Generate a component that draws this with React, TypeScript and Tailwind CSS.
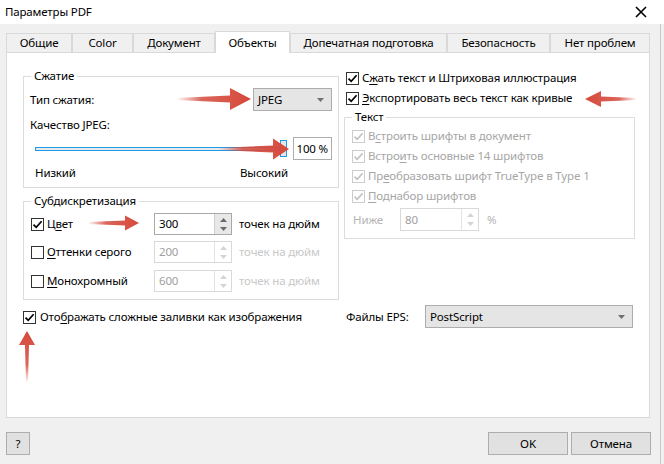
import React from "react";

const U = ({ children }: { children: React.ReactNode }) => (
  <span className="underline underline-offset-[2px] decoration-1">{children}</span>
);

function Check({ checked, disabled }: { checked?: boolean; disabled?: boolean }) {
  return (
    <span
      className={
        disabled
          ? "w-[13px] h-[13px] border border-[#cccccc] bg-white flex items-center justify-center shrink-0"
          : "w-[13px] h-[13px] border border-[#333333] bg-white flex items-center justify-center shrink-0"
      }
    >
      {checked && (
        <svg width="11" height="11" viewBox="0 0 11 11">
          <path
            d="M1.5 5.6 L4.2 8.3 L9.6 2.2"
            fill="none"
            stroke={disabled ? "#c2c2c2" : "#000000"}
            strokeWidth="1.7"
          />
        </svg>
      )}
    </span>
  );
}

function Tri({ up, color }: { up?: boolean; color: string }) {
  return (
    <svg width="7" height="4" viewBox="0 0 7 4">
      <path d={up ? "M0 4 L3.5 0 L7 4 Z" : "M0 0 L7 0 L3.5 4 Z"} fill={color} />
    </svg>
  );
}

function Spin({ value, disabled, w }: { value: string; disabled?: boolean; w: string }) {
  return (
    <div
      className={
        (disabled
          ? "border-[#d9d9d9] text-[#a0a0a0] "
          : "border-[#a9a9a9] text-black ") +
        w +
        " h-full flex border bg-white"
      }
    >
      <div className="flex-1 flex items-center pl-[4px]">{value}</div>
      <div
        className={
          disabled
            ? "w-[17px] border-l border-[#e3e3e3] bg-white flex flex-col items-center justify-center gap-[5px]"
            : "w-[17px] border-l border-[#cfcfcf] bg-[#e8e8e8] flex flex-col items-center justify-center gap-[5px]"
        }
      >
        <Tri up color={disabled ? "#d4d4d4" : "#6b6b6b"} />
        <Tri color={disabled ? "#d4d4d4" : "#6b6b6b"} />
      </div>
    </div>
  );
}

function Drop({ value, w }: { value: string; w: string }) {
  return (
    <div className={w + " h-[23px] border border-[#adadad] bg-[#e5e5e5] flex items-center pl-[4px] pr-[7px]"}>
      <span className="flex-1">{value}</span>
      <Tri color="#707070" />
    </div>
  );
}

function Group({
  title,
  className,
  children,
}: {
  title: string;
  className: string;
  children: React.ReactNode;
}) {
  return (
    <div className={"relative border border-[#dcdcdc] " + className}>
      <span className="absolute left-[7px] -top-[9px] px-[3px] bg-white leading-[16px]">{title}</span>
      {children}
    </div>
  );
}

function Arrows() {
  const red = "#d5493b";
  const right = (x0: number, x1: number, y: number, xb: number, hw: number, sw: number, id: string) => (
    <g>
      <defs>
        <linearGradient id={id} x1={x0} x2={x1} y1={y} y2={y} gradientUnits="userSpaceOnUse">
          <stop offset="0" stopColor={red} stopOpacity="0" />
          <stop offset="0.35" stopColor={red} stopOpacity="0.85" />
          <stop offset="1" stopColor={red} stopOpacity="1" />
        </linearGradient>
      </defs>
      <polygon
        points={`${x0},${y - 1} ${xb},${y - sw} ${xb},${y - hw} ${x1},${y} ${xb},${y + hw} ${xb},${y + sw} ${x0},${y + 1}`}
        fill={`url(#${id})`}
      />
    </g>
  );
  return (
    <svg className="absolute inset-0 pointer-events-none" width="664" height="464" viewBox="0 0 664 464">
      {right(176, 251, 99, 230, 11, 3.5, "a1")}
      {right(218, 289, 149, 273, 10.5, 3.5, "a2")}
      {right(88, 139, 223, 125, 7.5, 2.5, "a3")}
      {right(637, 585, 99, 601, 8, 2.5, "a4")}
      <defs>
        <linearGradient id="a5" x1="27" x2="27" y1="383" y2="331" gradientUnits="userSpaceOnUse">
          <stop offset="0" stopColor={red} stopOpacity="0" />
          <stop offset="0.35" stopColor={red} stopOpacity="0.85" />
          <stop offset="1" stopColor={red} stopOpacity="1" />
        </linearGradient>
      </defs>
      <polygon points="26,383 25,345 19,345 27,331 35,345 29,345 28,383" fill="url(#a5)" />
    </svg>
  );
}

const tabs: [string, string][] = [
  ["Общие", "w-[66px]"],
  ["Color", "w-[61px]"],
  ["Документ", "w-[82px]"],
  ["Объекты", "w-[75px]"],
  ["Допечатная подготовка", "w-[157px]"],
  ["Безопасность", "w-[103px]"],
  ["Нет проблем", "w-[100px]"],
];

export default function App() {
  return (
    <div className="relative w-[664px] h-[464px] bg-[#f0f0f0] overflow-hidden font-['Noto_Sans',sans-serif] text-[11.5px] tracking-[-0.15px] text-black leading-[16px] whitespace-nowrap">
      <div className="h-[24px] bg-white flex items-center justify-between pl-[5px] pr-[17px]">
        <span>Параметры PDF</span>
        <svg width="12" height="12" viewBox="0 0 12 12">
          <path d="M1 1 L11 11 M11 1 L1 11" stroke="#000" strokeWidth="1.6" />
        </svg>
      </div>
      <div className="flex h-[440px]">
        <div className="w-[660px] pl-[6px] pr-[10px]">
          <div className="mt-[7px] h-[21px] flex items-end">
            {tabs.map(([t, w]) =>
              t === "Объекты" ? (
                <div
                  key={t}
                  className={w + " h-[22px] -mb-px relative z-10 bg-white border border-b-0 border-[#d9d9d9] flex items-center justify-center"}
                >
                  {t}
                </div>
              ) : (
                <div
                  key={t}
                  className={w + " h-[19px] bg-[#f0f0f0] border border-b-0 border-[#d9d9d9] flex items-center justify-center"}
                >
                  {t}
                </div>
              )
            )}
          </div>
          <div className="h-[366px] border border-[#d9d9d9] bg-white flex">
            {/* left column */}
            <div className="ml-[16px] w-[316px]">
              <Group title="Сжатие" className="mt-[23px] h-[112px]">
                <div className="pl-[6px] pr-[6px] pt-[11px]">
                  <div className="h-[23px] flex items-center justify-between">
                    <span>Тип сжатия:</span>
                    <Drop value="JPEG" w="w-[79px]" />
                  </div>
                  <div className="mt-[6px]">Качество JPEG:</div>
                  <div className="mt-[4px] h-[23px] flex items-center">
                    <div className="pl-[5px] flex items-center">
                      <div className="w-[245px] h-[4px] border border-[#1e9be8] bg-[#e9eaea]" />
                      <div className="w-[7px] h-[17px] border border-[#1e9be8] bg-[#e6e6e6]" />
                    </div>
                    <div className="ml-auto w-[39px] h-[23px] border border-[#adadad] flex items-center justify-end pr-[3px]">
                      100 %
                    </div>
                  </div>
                  <div className="mt-[5px] pl-[5px] flex">
                    <span className="w-[205px]">Низкий</span>
                    <span>Высокий</span>
                  </div>
                </div>
              </Group>
              <Group title="Субдискретизация" className="mt-[13px] h-[99px]">
                <div className="pl-[7px] pt-[11px]">
                  <div className="h-[22px] flex items-center">
                    <div className="w-[123px] flex items-center">
                      <Check checked />
                      <span className="ml-[3px]">
                        Ц<U>в</U>ет
                      </span>
                    </div>
                    <Spin value="300" w="w-[78px]" />
                    <span className="ml-[7px]">точек на дюйм</span>
                  </div>
                  <div className="mt-[6px] h-[22px] flex items-center">
                    <div className="w-[123px] flex items-center">
                      <Check />
                      <span className="ml-[3px]">
                        <U>О</U>ттенки серого
                      </span>
                    </div>
                    <Spin value="200" disabled w="w-[78px]" />
                    <span className="ml-[7px] text-[#c8c8c8]">точек на дюйм</span>
                  </div>
                  <div className="mt-[7px] h-[22px] flex items-center">
                    <div className="w-[123px] flex items-center">
                      <Check />
                      <span className="ml-[3px]">
                        <U>М</U>онохромный
                      </span>
                    </div>
                    <Spin value="600" disabled w="w-[78px]" />
                    <span className="ml-[7px] text-[#c8c8c8]">точек на дюйм</span>
                  </div>
                </div>
              </Group>
              <div className="mt-[9px] flex items-center">
                <Check checked />
                <span className="ml-[4px]">
                  Ото<U>б</U>ражать сложные заливки как изображения
                </span>
              </div>
            </div>
            {/* right column */}
            <div className="ml-[5px] w-[291px] pt-[17px]">
              <div className="pl-[2px] h-[16px] flex items-center">
                <Check checked />
                <span className="ml-[3px]">
                  С<U>ж</U>ать текст и Штриховая иллюстрация
                </span>
              </div>
              <div className="mt-[4px] pl-[2px] h-[16px] flex items-center">
                <Check checked />
                <span className="ml-[3px]">
                  <U>Э</U>кспортировать весь текст как кривые
                </span>
              </div>
              <Group title="Текст" className="mt-[11px] h-[122px]">
                <div className="pl-[7px] pt-[8px] text-[#a6a6a6]">
                  <div className="h-[20px] flex items-center">
                    <Check checked disabled />
                    <span className="ml-[3px]">
                      В<U>с</U>троить шрифты в документ
                    </span>
                  </div>
                  <div className="h-[20px] flex items-center">
                    <Check checked disabled />
                    <span className="ml-[3px]">
                      Встро<U>и</U>ть основные 14 шрифтов
                    </span>
                  </div>
                  <div className="h-[20px] flex items-center">
                    <Check checked disabled />
                    <span className="ml-[3px]">
                      Пр<U>е</U>образовать шрифт TrueType в Type 1
                    </span>
                  </div>
                  <div className="h-[20px] flex items-center">
                    <Check checked disabled />
                    <span className="ml-[3px]">
                      <U>П</U>однабор шрифтов
                    </span>
                  </div>
                  <div className="mt-[2px] h-[23px] flex items-center pl-[1px]">
                    <span className="w-[47px] text-[#b4b4b4]">Ниже</span>
                    <Spin value="80" disabled w="w-[79px]" />
                    <span className="ml-[8px] text-[#b4b4b4]">%</span>
                  </div>
                </div>
              </Group>
              <div className="mt-[66px] pl-[2px] h-[23px] flex items-center">
                <span className="w-[79px]">Файлы EPS:</span>
                <Drop value="PostScript" w="w-[208px]" />
              </div>
            </div>
          </div>
          <div className="mt-[14px] flex -mr-px">
            <div className="w-[24px] h-[23px] border border-[#adadad] bg-[#e1e1e1] flex items-center justify-center">?</div>
            <div className="ml-auto w-[80px] h-[23px] border border-[#adadad] bg-[#e1e1e1] flex items-center justify-center">OK</div>
            <div className="ml-[3px] w-[80px] h-[23px] border border-[#adadad] bg-[#e1e1e1] flex items-center justify-center">Отмена</div>
          </div>
        </div>
        <div className="w-px bg-[#c9c9c9]" />
      </div>
      <Arrows />
    </div>
  );
}
